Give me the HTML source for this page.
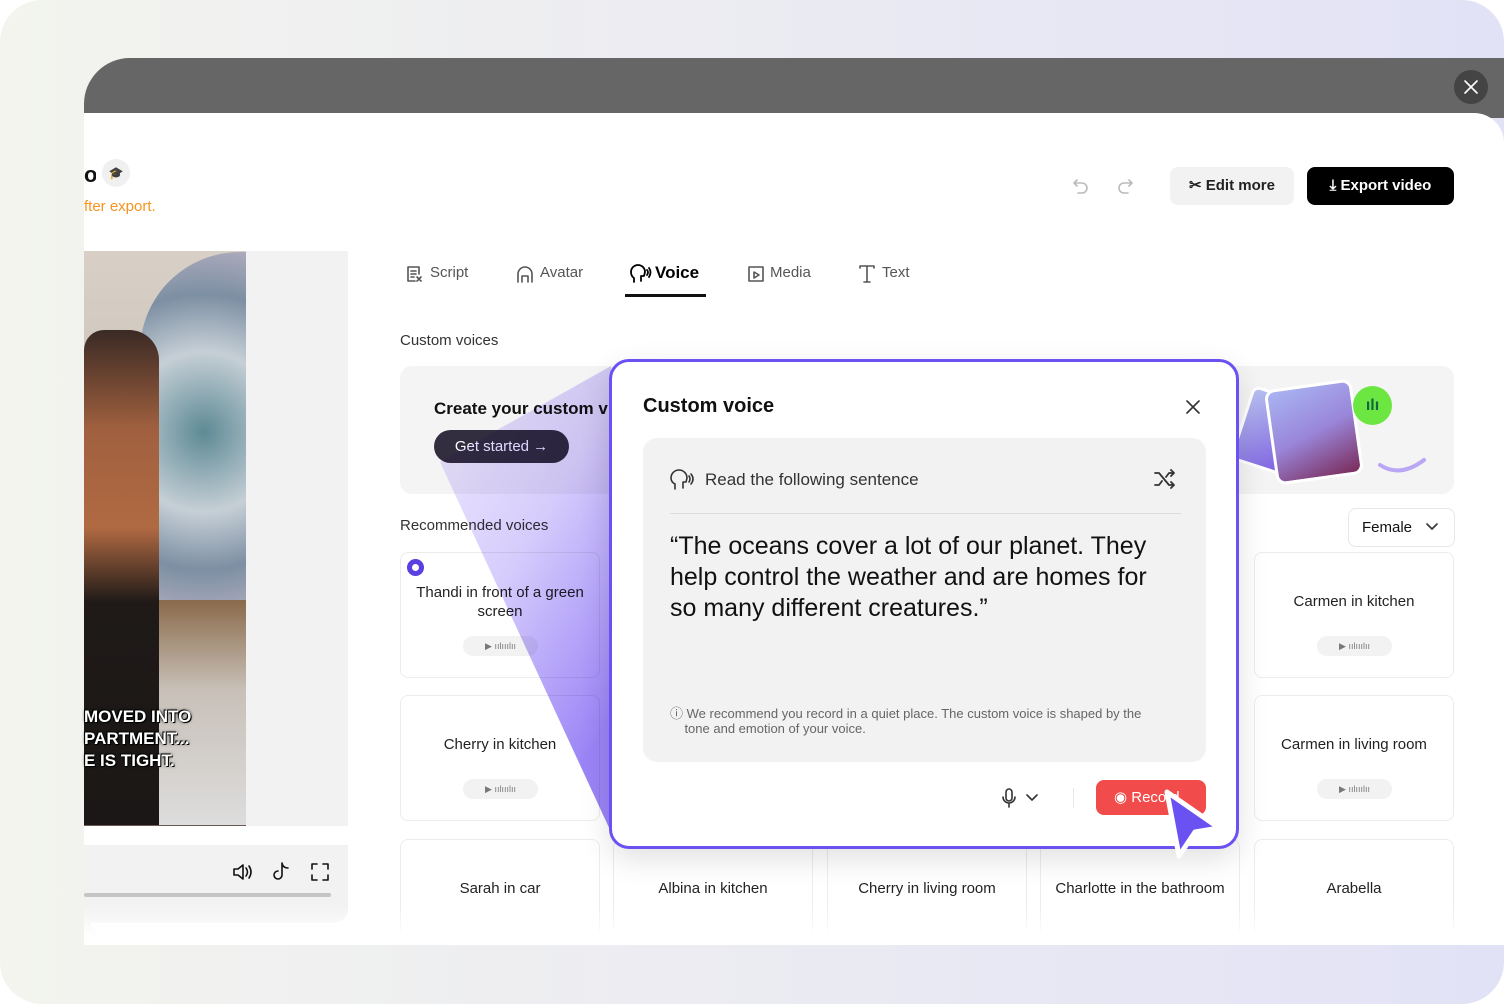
<!DOCTYPE html>
<html><head><meta charset="utf-8"><style>
*{box-sizing:border-box;margin:0;padding:0}
body{width:1504px;height:1004px;background:#fff;font-family:"Liberation Sans",sans-serif;position:relative;overflow:hidden;color:#111}
.abs{position:absolute}
.outer{left:0;top:0;width:1504px;height:1004px;border-radius:42px;background:linear-gradient(90deg,#f3f4ee 0%,#ececf2 45%,#e2e2f6 100%)}
.bar{left:84px;top:58px;width:1420px;height:60px;background:#666;border-top-left-radius:46px}
.panel{left:84px;top:113px;width:1420px;height:832px;background:#fff;border-top-right-radius:30px;border-bottom-left-radius:44px;overflow:hidden}
.tab{top:264px;font-size:15px;color:#555;display:flex;align-items:center;gap:6px}
.card{border:1px solid #ececec;border-radius:8px;background:#fff;width:200px;height:126px;text-align:center;font-size:15px;color:#222}
.card .t{position:absolute;left:0;right:0;top:40px}
.play{position:absolute;left:62px;width:75px;height:20px;border-radius:10px;background:#f2f2f2;font-size:9px;color:#777;line-height:20px}
svg.i{fill:none;stroke:currentColor;stroke-width:1.6;stroke-linecap:round;stroke-linejoin:round}
</style></head><body>
<div class="abs outer"></div>
<div class="abs bar"></div>
<div class="abs" style="left:1454px;top:70px;width:34px;height:34px;border-radius:50%;background:#444"></div>
<svg class="abs i" style="left:1463px;top:79px;color:#fff" width="16" height="16"><path d="M2 2L14 14M14 2L2 14"/></svg>
<div class="abs panel"></div>
<div class="abs" style="left:84px;top:162px;font-size:22px;font-weight:bold;width:12px;overflow:hidden">o</div>
<div class="abs" style="left:102px;top:159px;width:28px;height:28px;border-radius:50%;background:#f0f0f0;color:#888;font-size:12px;text-align:center;line-height:28px">🎓</div>
<div class="abs" style="left:84px;top:198px;font-size:15px;color:#f7931e">fter export.</div>
<svg class="abs i" style="left:1072px;top:177px;color:#bbb" width="18" height="18"><path d="M5 3L2 6L5 9M2 6H10A5 5 0 0 1 10 16H6"/></svg>
<svg class="abs i" style="left:1116px;top:177px;color:#bbb" width="18" height="18"><path d="M13 3L16 6L13 9M16 6H8A5 5 0 0 0 8 16H12"/></svg>
<div class="abs" style="left:1170px;top:167px;width:124px;height:38px;border-radius:8px;background:#f2f2f2;font-size:15px;font-weight:bold;color:#222;line-height:38px;text-align:center">✂ Edit more</div>
<div class="abs" style="left:1307px;top:167px;width:147px;height:38px;border-radius:8px;background:#000;font-size:15px;font-weight:bold;color:#fff;line-height:38px;text-align:center">⤓ Export video</div>
<!-- video -->
<div class="abs" style="left:84px;top:251px;width:264px;height:575px;background:#f2f2f2"></div>
<div class="abs" style="left:84px;top:251px;width:162px;height:575px;background:linear-gradient(180deg,#d8cfc6 0%,#c8c0b8 40%,#a08b7a 60%,#c9c2bb 80%,#6c5b52 100%)"></div>
<div class="abs" style="left:140px;top:252px;width:106px;height:400px;border-radius:100px 0 0 0;background:radial-gradient(circle at 60% 45%,#5d8a95,#c6cfd6 35%,#7d8fa3 60%,#aab 80%,#d6d6d6)"></div>
<div class="abs" style="left:84px;top:330px;width:75px;height:495px;background:linear-gradient(180deg,#3a2a25 0%,#a0603f 20%,#b06a42 40%,#1f1a18 55%,#1a1716 100%);border-radius:20px 30px 0 0"></div>
<div class="abs" style="left:159px;top:600px;width:87px;height:225px;background:linear-gradient(180deg,#8a6a4a,#c8c0b8 40%,#ddd)"></div>
<div class="abs" style="left:84px;top:706px;font-size:17px;font-weight:bold;color:#fff;line-height:22px;text-shadow:0 0 3px #000,1px 1px 0 #000,-1px -1px 0 #000">MOVED INTO<br>PARTMENT...<br>E IS TIGHT.</div>
<div class="abs" style="left:84px;top:845px;width:264px;height:78px;background:#f2f2f2;border-radius:0 0 14px 0"></div>
<div class="abs" style="left:84px;top:893px;width:247px;height:4px;border-radius:2px;background:#c5c5c5"></div>
<svg class="abs i" style="left:232px;top:862px;color:#111" width="22" height="20"><path d="M2 7H6L11 3V17L6 13H2Z M14 6Q17 10 14 14 M17 4Q21 10 17 16"/></svg>
<svg class="abs i" style="left:272px;top:861px;color:#111" width="20" height="22"><path d="M10 2V14A4 4 0 1 1 6 10 M10 2Q11 7 16 7"/></svg>
<svg class="abs i" style="left:311px;top:863px;color:#111" width="18" height="18"><path d="M1 6V1H6M12 1H17V6M17 12V17H12M6 17H1V12"/></svg>
<!-- tabs -->
<svg class="abs i" style="left:405px;top:265px;color:#555" width="18" height="18"><path d="M3 2H14V9M3 2V16H10M6 6H11M6 9H11M6 12H9M12 12L16 16M16 12L12 16"/></svg>
<div class="abs tab" style="left:430px">Script</div>
<svg class="abs i" style="left:516px;top:265px;color:#555" width="18" height="18"><path d="M2 17V9A7 7 0 0 1 16 9V17M6 17V11H12V17"/></svg>
<div class="abs tab" style="left:540px">Avatar</div>
<svg class="abs i" style="left:630px;top:264px;color:#000;stroke-width:1.8" width="22" height="20"><path d="M4 18V14Q1 12 1 8A7 7 0 0 1 15 8L14 12H11V17 M17 6Q19 8 17 11 M19 4Q22 8 19 13"/></svg>
<div class="abs tab" style="left:655px;color:#000;font-weight:bold;font-size:17px;top:263px">Voice</div>
<div class="abs" style="left:625px;top:294px;width:81px;height:3px;background:#111"></div>
<svg class="abs i" style="left:747px;top:265px;color:#555" width="18" height="18"><path d="M2 2H16V16H2Z M7 7L12 10L7 13Z"/></svg>
<div class="abs tab" style="left:770px">Media</div>
<svg class="abs i" style="left:858px;top:264px;color:#555" width="18" height="20"><path d="M2 4V2H16V4M9 2V18M6 18H12"/></svg>
<div class="abs tab" style="left:882px">Text</div>
<div class="abs" style="left:400px;top:332px;font-size:15px;color:#333">Custom voices</div>
<div class="abs" style="left:400px;top:366px;width:1054px;height:128px;background:#f4f4f4;border-radius:12px"></div>
<div class="abs" style="left:434px;top:399px;font-size:17px;font-weight:bold">Create your custom v</div>
<div class="abs" style="left:434px;top:430px;width:135px;height:33px;border-radius:17px;background:#332d40;color:#fff;font-size:15px;line-height:33px;text-align:center">Get started →</div>
<!-- banner art -->
<div class="abs" style="left:1240px;top:392px;width:60px;height:78px;background:linear-gradient(135deg,#b8c2f0,#7c5ce0);transform:rotate(18deg);border-radius:8px;border:3px solid #fff"></div>
<div class="abs" style="left:1270px;top:384px;width:88px;height:96px;background:linear-gradient(160deg,#a9b4f2,#9a86da 50%,#7a2b5a);border:3px solid #fff;border-radius:10px;transform:rotate(-8deg)"></div>
<svg class="abs" style="left:1340px;top:430px" width="90" height="50"><path d="M40 35Q60 48 84 30" fill="none" stroke="#b9a6f4" stroke-width="4" stroke-linecap="round"/></svg>
<div class="abs" style="left:1353px;top:386px;width:39px;height:39px;border-radius:50%;background:#6ce640;font-size:16px;text-align:center;line-height:39px;font-weight:bold;color:#164">ılı</div>
<div class="abs" style="left:400px;top:517px;font-size:15px;color:#333">Recommended voices</div>
<div class="abs" style="left:1348px;top:508px;width:107px;height:39px;border:1px solid #e6e6e6;border-radius:8px;font-size:15px;line-height:38px;padding-left:13px">Female</div>
<svg class="abs i" style="left:1426px;top:522px;color:#333" width="12" height="10"><path d="M1 2L6 7L11 2"/></svg>
<!-- cards -->
<div class="abs card" style="left:400px;top:552px"><div class="abs" style="left:6px;top:6px;width:17px;height:17px;border-radius:50%;border:5px solid #5b3fe0"></div><div class="t" style="top:30px;line-height:19px">Thandi in front of a green<br>screen</div><div class="play" style="top:83px">▶ ıılııılıı</div></div>
<div class="abs card" style="left:400px;top:695px"><div class="t">Cherry in kitchen</div><div class="play" style="top:83px">▶ ıılııılıı</div></div>
<div class="abs card" style="left:1254px;top:552px"><div class="t">Carmen in kitchen</div><div class="play" style="top:83px">▶ ıılııılıı</div></div>
<div class="abs card" style="left:1254px;top:695px"><div class="t">Carmen in living room</div><div class="play" style="top:83px">▶ ıılııılıı</div></div>
<div class="abs card" style="left:400px;top:839px;height:93px;border-bottom:0;border-radius:8px 8px 0 0"><div class="t">Sarah in car</div></div>
<div class="abs card" style="left:613px;top:839px;height:93px;border-bottom:0;border-radius:8px 8px 0 0"><div class="t">Albina in kitchen</div></div>
<div class="abs card" style="left:827px;top:839px;height:93px;border-bottom:0;border-radius:8px 8px 0 0"><div class="t">Cherry in living room</div></div>
<div class="abs card" style="left:1040px;top:839px;height:93px;border-bottom:0;border-radius:8px 8px 0 0"><div class="t">Charlotte in the bathroom</div></div>
<div class="abs card" style="left:1254px;top:839px;height:93px;border-bottom:0;border-radius:8px 8px 0 0"><div class="t">Arabella</div></div>
<div class="abs" style="left:84px;top:905px;width:1420px;height:40px;background:linear-gradient(180deg,rgba(255,255,255,0),#fff 80%)"></div>
<!-- beam -->
<svg class="abs" style="left:0;top:0;mix-blend-mode:multiply" width="1504" height="1004"><defs><linearGradient id="g" x1="0" y1="0" x2="0.6" y2="1"><stop offset="0" stop-color="#f1edff"/><stop offset="0.5" stop-color="#d6ccfc"/><stop offset="1" stop-color="#9a84f6"/></linearGradient></defs><polygon points="611,366 440,462 611,832" fill="url(#g)"/></svg>
<!-- modal -->
<div class="abs" style="left:609px;top:359px;width:630px;height:490px;border:3px solid #6a52f2;border-radius:20px;background:#fff;box-shadow:0 10px 30px rgba(0,0,0,.12)"></div>
<div class="abs" style="left:643px;top:395px;font-size:20px;font-weight:bold">Custom voice</div>
<svg class="abs i" style="left:1186px;top:400px;color:#333" width="14" height="14"><path d="M1 1L13 13M13 1L1 13"/></svg>
<div class="abs" style="left:643px;top:438px;width:563px;height:324px;background:#f2f2f2;border-radius:14px"></div>
<svg class="abs i" style="left:670px;top:469px;color:#333" width="26" height="22"><path d="M5 20V15Q1 13 1 9A8 8 0 0 1 17 9L16 13H13V19 M19 7Q21 10 19 13 M21 5Q25 10 21 15"/></svg>
<div class="abs" style="left:705px;top:470px;font-size:17px;color:#333">Read the following sentence</div>
<svg class="abs i" style="left:1154px;top:469px;color:#333;stroke-width:1.8" width="22" height="20"><path d="M1 4H5L15 16H20M1 16H5L8 12M12 8L15 4H20M17 1L20 4L17 7M17 13L20 16L17 19"/></svg>
<div class="abs" style="left:670px;top:513px;width:511px;height:1px;background:#ddd"></div>
<div class="abs" style="left:670px;top:531px;font-size:25px;line-height:31px;color:#111;width:500px">“The oceans cover a lot of our planet. They help control the weather and are homes for so many different creatures.”</div>
<div class="abs" style="left:670px;top:706px;font-size:13px;color:#666;line-height:15px;width:510px">ⓘ We recommend you record in a quiet place. The custom voice is shaped by the<br>&nbsp;&nbsp;&nbsp;&nbsp;tone and emotion of your voice.</div>
<svg class="abs i" style="left:1000px;top:787px;color:#333" width="18" height="22"><path d="M9 2A3 3 0 0 0 6 5V11A3 3 0 0 0 12 11V5A3 3 0 0 0 9 2Z M3 10A6 6 0 0 0 15 10 M9 16V20"/></svg>
<svg class="abs i" style="left:1026px;top:793px;color:#333" width="12" height="10"><path d="M1 2L6 7L11 2"/></svg>
<div class="abs" style="left:1073px;top:788px;width:1px;height:20px;background:#e6e6e6"></div>
<div class="abs" style="left:1096px;top:780px;width:110px;height:35px;border-radius:8px;background:#f24b4b;color:#fff;font-size:15px;line-height:35px;padding-left:18px">◉ Record</div>
<svg class="abs" style="left:1155px;top:780px" width="80" height="85"><path d="M12 12 L64 48 L40 52 L24 76 Z" fill="#6a52f2" stroke="#fff" stroke-width="5" stroke-linejoin="round"/></svg>
</body></html>
